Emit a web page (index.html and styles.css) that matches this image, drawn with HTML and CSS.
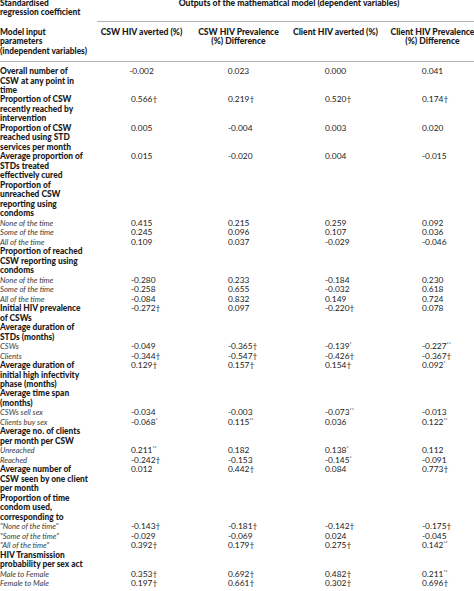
FILE: index.html
```html
<!DOCTYPE html>
<html>
<head>
<meta charset="utf-8">
<link rel="stylesheet" href="styles.css">
</head>
<body>
<div class="sheet">
<table class="results">
<colgroup>
<col class="c-label"><col class="c-num"><col class="c-num"><col class="c-num"><col class="c-num">
</colgroup>
<thead>
<tr class="h1">
<th class="corner">Standardised<br>regression coefficient</th>
<th class="outputs" colspan="4"><div class="outputs-title">Outputs of the mathematical model (dependent variables)</div></th>
</tr>
<tr class="h2">
<th class="corner">Model input<br>parameters<br>(independent variables)</th>
<th class="colhead">CSW HIV averted (%)</th>
<th class="colhead">CSW HIV Prevalence<br>(%) Difference</th>
<th class="colhead">Client HIV averted (%)</th>
<th class="colhead">Client HIV Prevalence<br>(%) Difference</th>
</tr>
</thead>
<tbody>
<tr class="first">
<td class="lbl">Overall number of<br>CSW at any point in<br>time</td>
<td class="val ctr">-0.002</td><td class="val ctr">0.023</td><td class="val ctr">0.000</td><td class="val ctr">0.041</td>
</tr>
<tr>
<td class="lbl">Proportion of CSW<br>recently reached by<br>intervention</td>
<td class="val">0.566†</td><td class="val">0.219†</td><td class="val">0.520†</td><td class="val">0.174†</td>
</tr>
<tr>
<td class="lbl">Proportion of CSW<br>reached using STD<br>services per month</td>
<td class="val">0.005</td><td class="val">-0.004</td><td class="val">0.003</td><td class="val">0.020</td>
</tr>
<tr>
<td class="lbl">Average proportion of<br>STDs treated<br>effectively cured</td>
<td class="val">0.015</td><td class="val">-0.020</td><td class="val">0.004</td><td class="val">-0.015</td>
</tr>
<tr>
<td class="lbl">Proportion of<br>unreached CSW<br>reporting using<br>condoms</td>
<td class="val"></td><td class="val"></td><td class="val"></td><td class="val"></td>
</tr>
<tr>
<td class="sub">None of the time</td>
<td class="val">0.415</td><td class="val">0.215</td><td class="val">0.259</td><td class="val">0.092</td>
</tr>
<tr>
<td class="sub">Some of the time</td>
<td class="val">0.245</td><td class="val">0.096</td><td class="val">0.107</td><td class="val">0.036</td>
</tr>
<tr>
<td class="sub">All of the time</td>
<td class="val">0.109</td><td class="val">0.037</td><td class="val">-0.029</td><td class="val">-0.046</td>
</tr>
<tr>
<td class="lbl">Proportion of reached<br>CSW reporting using<br>condoms</td>
<td class="val"></td><td class="val"></td><td class="val"></td><td class="val"></td>
</tr>
<tr>
<td class="sub">None of the time</td>
<td class="val">-0.280</td><td class="val">0.233</td><td class="val">-0.184</td><td class="val">0.230</td>
</tr>
<tr>
<td class="sub">Some of the time</td>
<td class="val">-0.258</td><td class="val">0.655</td><td class="val">-0.032</td><td class="val">0.618</td>
</tr>
<tr>
<td class="sub">All of the time</td>
<td class="val">-0.084</td><td class="val">0.832</td><td class="val">0.149</td><td class="val">0.724</td>
</tr>
<tr>
<td class="lbl">Initial HIV prevalence<br>of CSWs</td>
<td class="val">-0.272†</td><td class="val">0.097</td><td class="val">-0.220†</td><td class="val">0.078</td>
</tr>
<tr>
<td class="lbl">Average duration of<br>STDs (months)</td>
<td class="val"></td><td class="val"></td><td class="val"></td><td class="val"></td>
</tr>
<tr>
<td class="sub">CSWs</td>
<td class="val">-0.049</td><td class="val">-0.365†</td><td class="val">-0.139<sup class="sig">*</sup></td><td class="val">-0.227<sup class="sig">**</sup></td>
</tr>
<tr>
<td class="sub">Clients</td>
<td class="val">-0.344†</td><td class="val">-0.547†</td><td class="val">-0.426†</td><td class="val">-0.367†</td>
</tr>
<tr>
<td class="lbl">Average duration of<br>initial high infectivity<br>phase (months)</td>
<td class="val">0.129†</td><td class="val">0.157†</td><td class="val">0.154†</td><td class="val">0.092<sup class="sig">*</sup></td>
</tr>
<tr>
<td class="lbl">Average time span<br>(months)</td>
<td class="val"></td><td class="val"></td><td class="val"></td><td class="val"></td>
</tr>
<tr>
<td class="sub">CSWs sell sex</td>
<td class="val">-0.034</td><td class="val">-0.003</td><td class="val">-0.073<sup class="sig">**</sup></td><td class="val">-0.013</td>
</tr>
<tr>
<td class="sub">Clients buy sex</td>
<td class="val">-0.068<sup class="sig">*</sup></td><td class="val">0.115<sup class="sig">**</sup></td><td class="val">0.036</td><td class="val">0.122<sup class="sig">**</sup></td>
</tr>
<tr>
<td class="lbl">Average no. of clients<br>per month per CSW</td>
<td class="val"></td><td class="val"></td><td class="val"></td><td class="val"></td>
</tr>
<tr>
<td class="sub">Unreached</td>
<td class="val">0.211<sup class="sig">**</sup></td><td class="val">0.182</td><td class="val">0.138<sup class="sig">*</sup></td><td class="val">0.112</td>
</tr>
<tr>
<td class="sub">Reached</td>
<td class="val">-0.242†</td><td class="val">-0.153</td><td class="val">-0.145<sup class="sig">*</sup></td><td class="val">-0.091</td>
</tr>
<tr>
<td class="lbl">Average number of<br>CSW seen by one client<br>per month</td>
<td class="val">0.012</td><td class="val">0.442†</td><td class="val">0.084</td><td class="val">0.773†</td>
</tr>
<tr>
<td class="lbl">Proportion of time<br>condom used,<br>corresponding to</td>
<td class="val"></td><td class="val"></td><td class="val"></td><td class="val"></td>
</tr>
<tr>
<td class="sub">"None of the time"</td>
<td class="val">-0.143†</td><td class="val">-0.181†</td><td class="val">-0.142†</td><td class="val">-0.175†</td>
</tr>
<tr>
<td class="sub">"Some of the time"</td>
<td class="val">-0.029</td><td class="val">-0.069</td><td class="val">0.024</td><td class="val">-0.045</td>
</tr>
<tr>
<td class="sub">"All of the time"</td>
<td class="val">0.392†</td><td class="val">0.179†</td><td class="val">0.275†</td><td class="val">0.142<sup class="sig">**</sup></td>
</tr>
<tr>
<td class="lbl">HIV Transmission<br>probability per sex act</td>
<td class="val"></td><td class="val"></td><td class="val"></td><td class="val"></td>
</tr>
<tr>
<td class="sub">Male to Female</td>
<td class="val">0.353†</td><td class="val">0.692†</td><td class="val">0.482†</td><td class="val">0.211<sup class="sig">**</sup></td>
</tr>
<tr>
<td class="sub">Female to Male</td>
<td class="val">0.197†</td><td class="val">0.661†</td><td class="val">0.302†</td><td class="val">0.696†</td>
</tr>
</tbody>
</table>
</div>
</body>
</html>
```
FILE: styles.css
```css
html, body {
  margin: 0;
  padding: 0;
  background: #ffffff;
  overflow: hidden;
}
body {
  font-family: Lato, "Liberation Sans", sans-serif;
  color: #1a1a1a;
}
.sheet {
  margin-top: -2px;
}
.results {
  border-collapse: collapse;
  table-layout: fixed;
  width: 481px;
  font-size: 8.4px;
  line-height: 9.48px;
}
.c-label { width: 93px; }
.c-num { width: 97px; }
.results th, .results td {
  padding: 0;
  vertical-align: top;
  white-space: nowrap;
}
.results th {
  font-weight: 900;
  font-size: 8.6px;
}
.corner {
  text-align: left;
}
.results .h1 .corner, .results .h2 .corner {
  font-size: 8.4px;
}
.h1 th {
  padding: 1px 0 0 0;
}
.h1 .corner {
  padding-bottom: 5px;
}
.outputs {
  text-align: center;
}
.outputs-title {
  margin-left: 4px;
  padding-bottom: 4px;
  border-bottom: 1px solid #b4b4b4;
  height: 18px;
}
.h2 th {
  padding: 4.6px 0 5px 0;
  border-bottom: 1px solid #b4b4b4;
}
.colhead {
  text-align: center;
  line-height: 8.8px;
  padding-top: 5px !important;
}
.first td {
  padding-top: 5px;
}
.lbl {
  font-weight: 900;
  font-size: 8.4px;
  text-align: left;
}
.sub {
  font-style: italic;
  color: #3a3a3a;
  font-size: 7.7px;
}
.val {
  text-align: left;
  padding-left: 38px !important;
}
.val.ctr {
  text-align: center;
  padding-left: 0 !important;
}
.sig {
  font-size: 5px;
  line-height: 0;
  vertical-align: 3px;
}
```
